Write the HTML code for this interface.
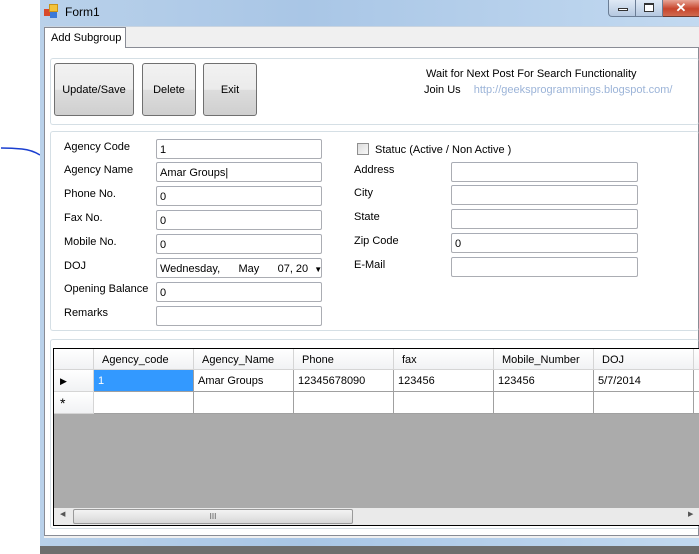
<!DOCTYPE html>
<html><head><style>
*{margin:0;padding:0;box-sizing:border-box}
body{width:699px;height:554px;position:relative;overflow:hidden;background:#fff;font-family:"Liberation Sans",sans-serif;font-size:11px;color:#000}
.a{position:absolute;white-space:nowrap}
.tb{border:1px solid #abadb3;border-top-color:#a8acb5;background:#fff;border-radius:2px;height:20px;width:166px;padding:4px 3px 0;font-size:11px}
.lb{font-size:11px;margin-top:2px}
.btn{position:absolute;top:63px;height:53px;border:1px solid #707070;border-radius:3px;background:linear-gradient(#f2f2f2 0%,#ebebeb 50%,#dddddd 51%,#cfcfcf 100%);text-align:center;line-height:53px;font-size:11px}
.gb{position:absolute;border:1px solid #d5dfe5;border-radius:3px;border-right:none}
.hd{position:absolute;top:349px;height:21px;background:linear-gradient(#fff,#f1f2f4);border-right:1px solid #d5d5d5;border-bottom:1px solid #d5d5d5;padding:5px 8px;font-size:11px}
.cl{position:absolute;height:22px;border-right:1px solid #a0a0a0;border-bottom:1px solid #a0a0a0;background:#fff;padding:5px 4px;font-size:11px}
</style></head><body>
<svg class="a" style="left:0;top:140px" width="42" height="20"><path d="M1 8 Q12 8 22 9 Q32 10 40 15" stroke="#1a3fd0" stroke-width="1.5" fill="none"/></svg>
<div class="a" style="left:40px;top:0;width:659px;height:546px;background:linear-gradient(90deg,#b9d1ea,#a9c6e6 40%,#c2d9f0);"></div>
<div class="a" style="left:40px;top:546px;width:659px;height:8px;background:#6e6e6e"></div>
<div class="a" style="left:44px;top:4px;width:14px;height:14px">
<div class="a" style="left:0;top:5px;width:7px;height:7px;background:#d84a2a"></div>
<div class="a" style="left:5px;top:0;width:9px;height:8px;background:#f2c23a;border:1px solid #c89318"></div>
<div class="a" style="left:6px;top:8px;width:7px;height:6px;background:#3a78d8"></div></div>
<div class="a" style="left:65px;top:5px;font-size:12px">Form1</div>
<div class="a" style="left:608px;top:0;width:28px;height:17px;background:linear-gradient(#dfe9f5,#b5c8e0);border:1px solid #6b7d95;border-top:none;border-radius:0 0 0 4px"><div class="a" style="left:9px;top:8px;width:10px;height:3px;border:1px solid #333;background:#fff"></div></div>
<div class="a" style="left:636px;top:0;width:27px;height:17px;background:linear-gradient(#dfe9f5,#b5c8e0);border:1px solid #6b7d95;border-top:none;border-left:none"><div class="a" style="left:8px;top:3px;width:10px;height:9px;border:1px solid #333;border-top-width:2px;background:#fff"></div></div>
<div class="a" style="left:663px;top:0;width:36px;height:17px;background:linear-gradient(#e8a597,#c7452c 55%,#d06a4f);border-bottom:1px solid #6b3a30;color:#fff;font-weight:bold;font-size:13px;text-align:center;line-height:15px">✕</div>
<div class="a" style="left:44px;top:26px;width:655px;height:512px;background:#f0f0f0;border-top:1px solid #c9d4e0"></div>
<div class="a" style="left:44px;top:47px;width:655px;height:489px;background:#fff;border:1px solid #898c95"></div>
<div class="a" style="left:44px;top:27px;width:82px;height:21px;background:#fff;border:1px solid #898c95;border-bottom:none;padding:4px 6px;font-size:11px">Add Subgroup</div>
<div class="gb" style="left:50px;top:58px;width:649px;height:67px"></div>
<div class="btn" style="left:54px;width:80px">Update/Save</div>
<div class="btn" style="left:142px;width:54px">Delete</div>
<div class="btn" style="left:203px;width:54px">Exit</div>
<div class="a lb" style="left:426px;top:66px">Wait for Next Post For Search Functionality</div>
<div class="a lb" style="left:424px;top:82px">Join Us <span style="color:#9cb4d8;margin-left:10px">http://geeksprogrammings.blogspot.com/</span></div>
<div class="gb" style="left:50px;top:131px;width:649px;height:200px"></div>
<div class="a lb" style="left:64px;top:139px">Agency Code</div>
<div class="a lb" style="left:64px;top:162px">Agency Name</div>
<div class="a lb" style="left:64px;top:186px">Phone No.</div>
<div class="a lb" style="left:64px;top:210px">Fax No.</div>
<div class="a lb" style="left:64px;top:234px">Mobile No.</div>
<div class="a lb" style="left:64px;top:258px">DOJ</div>
<div class="a lb" style="left:64px;top:281px">Opening Balance</div>
<div class="a lb" style="left:64px;top:305px">Remarks</div>
<div class="a tb" style="left:156px;top:139px">1</div>
<div class="a tb" style="left:156px;top:162px">Amar Groups|</div>
<div class="a tb" style="left:156px;top:186px">0</div>
<div class="a tb" style="left:156px;top:210px">0</div>
<div class="a tb" style="left:156px;top:234px">0</div>
<div class="a tb" style="left:156px;top:258px;white-space:pre">Wednesday,      May      07, 20  <span style="font-size:8px">▼</span></div>
<div class="a tb" style="left:156px;top:282px">0</div>
<div class="a tb" style="left:156px;top:306px"></div>
<div class="a" style="left:357px;top:143px;width:12px;height:12px;border:1px solid #8f8f8f;background:linear-gradient(135deg,#dcdcdc,#f8f8f8)"></div>
<div class="a lb" style="left:375px;top:142px">Statuc (Active / Non Active )</div>
<div class="a lb" style="left:354px;top:162px">Address</div>
<div class="a lb" style="left:354px;top:185px">City</div>
<div class="a lb" style="left:354px;top:209px">State</div>
<div class="a lb" style="left:354px;top:233px">Zip Code</div>
<div class="a lb" style="left:354px;top:257px">E-Mail</div>
<div class="a tb" style="left:451px;top:162px;width:187px"></div>
<div class="a tb" style="left:451px;top:185px;width:187px"></div>
<div class="a tb" style="left:451px;top:209px;width:187px"></div>
<div class="a tb" style="left:451px;top:233px;width:187px">0</div>
<div class="a tb" style="left:451px;top:257px;width:187px"></div>
<div class="gb" style="left:50px;top:339px;width:649px;height:190px"></div>
<div class="a" style="left:53px;top:348px;width:646px;height:178px;background:#ababab;border:1px solid #000;border-right:none"></div>
<div class="hd" style="left:54px;width:40px"></div>
<div class="hd" style="left:94px;width:100px">Agency_code</div>
<div class="hd" style="left:194px;width:100px">Agency_Name</div>
<div class="hd" style="left:294px;width:100px">Phone</div>
<div class="hd" style="left:394px;width:100px">fax</div>
<div class="hd" style="left:494px;width:100px">Mobile_Number</div>
<div class="hd" style="left:594px;width:100px">DOJ</div>
<div class="hd" style="left:694px;width:5px"></div>
<div class="hd" style="left:54px;top:370px;width:40px;height:22px;font-size:9px;padding:6px 6px">▶</div>
<div class="hd" style="left:54px;top:392px;width:40px;height:22px;font-size:14px;padding:3px 6px">*</div>
<div class="cl" style="left:94px;top:370px;width:100px;background:#3399ff;color:#fff">1</div>
<div class="cl" style="left:194px;top:370px;width:100px">Amar Groups</div>
<div class="cl" style="left:294px;top:370px;width:100px">12345678090</div>
<div class="cl" style="left:394px;top:370px;width:100px">123456</div>
<div class="cl" style="left:494px;top:370px;width:100px">123456</div>
<div class="cl" style="left:594px;top:370px;width:100px">5/7/2014</div>
<div class="cl" style="left:694px;top:370px;width:5px"></div>
<div class="cl" style="left:94px;top:392px;width:100px"></div>
<div class="cl" style="left:194px;top:392px;width:100px"></div>
<div class="cl" style="left:294px;top:392px;width:100px"></div>
<div class="cl" style="left:394px;top:392px;width:100px"></div>
<div class="cl" style="left:494px;top:392px;width:100px"></div>
<div class="cl" style="left:594px;top:392px;width:100px"></div>
<div class="cl" style="left:694px;top:392px;width:5px"></div>
<div class="a" style="left:54px;top:508px;width:645px;height:17px;background:#eaeaea"></div>
<div class="a" style="left:60px;top:510px;font-size:7px;color:#555">◀</div>
<div class="a" style="left:73px;top:509px;width:280px;height:15px;border:1px solid #9a9a9a;border-radius:2px;background:linear-gradient(#f3f3f3,#d8d8d8);text-align:center;font-size:8px;line-height:13px;color:#555">III</div>
<div class="a" style="left:688px;top:510px;font-size:7px;color:#555">▶</div>
</body></html>
